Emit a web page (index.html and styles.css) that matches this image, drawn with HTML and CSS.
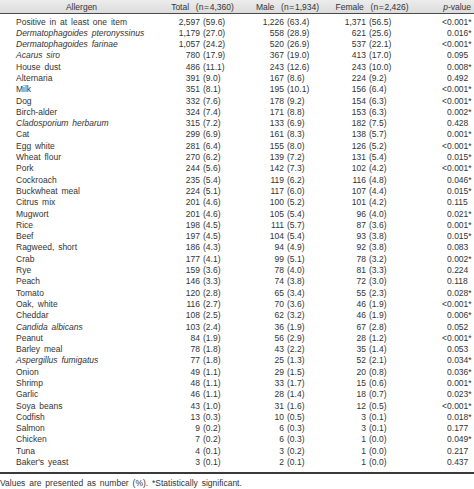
FILE: index.html
```html
<!DOCTYPE html>
<html>
<head>
<meta charset="utf-8">
<link rel="stylesheet" href="styles.css">
</head>
<body>
<table class="tbl">
<colgroup>
<col class="c-name"><col class="c-tn"><col class="c-tp"><col class="c-mn"><col class="c-mp"><col class="c-fn"><col class="c-fp"><col class="c-lt"><col class="c-pv">
</colgroup>
<thead>
<tr>
<th class="h-name">Allergen</th>
<th colspan="2" class="h-tot">Total&nbsp; (n&#8202;=&#8202;4,360)</th>
<th colspan="2" class="h-m">Male&nbsp; (n&#8202;=&#8202;1,934)</th>
<th colspan="2" class="h-f">Female&nbsp; (n&#8202;=&#8202;2,426)</th>
<th colspan="2" class="h-p"><i>p</i>-value</th>
</tr>
</thead>
<tbody>
<tr><td>Positive in at least one item</td><td>2,597</td><td>(59.6)</td><td>1,226</td><td>(63.4)</td><td>1,371</td><td>(56.5)</td><td>&lt;</td><td>0.001*</td></tr>
<tr><td><i>Dermatophagoides pteronyssinus</i></td><td>1,179</td><td>(27.0)</td><td>558</td><td>(28.9)</td><td>621</td><td>(25.6)</td><td></td><td>0.016*</td></tr>
<tr><td><i>Dermatophagoides farinae</i></td><td>1,057</td><td>(24.2)</td><td>520</td><td>(26.9)</td><td>537</td><td>(22.1)</td><td>&lt;</td><td>0.001*</td></tr>
<tr><td><i>Acarus siro</i></td><td>780</td><td>(17.9)</td><td>367</td><td>(19.0)</td><td>413</td><td>(17.0)</td><td></td><td>0.095</td></tr>
<tr><td>House dust</td><td>486</td><td>(11.1)</td><td>243</td><td>(12.6)</td><td>243</td><td>(10.0)</td><td></td><td>0.008*</td></tr>
<tr><td>Alternaria</td><td>391</td><td>(9.0)</td><td>167</td><td>(8.6)</td><td>224</td><td>(9.2)</td><td></td><td>0.492</td></tr>
<tr><td>Milk</td><td>351</td><td>(8.1)</td><td>195</td><td>(10.1)</td><td>156</td><td>(6.4)</td><td>&lt;</td><td>0.001*</td></tr>
<tr><td>Dog</td><td>332</td><td>(7.6)</td><td>178</td><td>(9.2)</td><td>154</td><td>(6.3)</td><td>&lt;</td><td>0.001*</td></tr>
<tr><td>Birch-alder</td><td>324</td><td>(7.4)</td><td>171</td><td>(8.8)</td><td>153</td><td>(6.3)</td><td></td><td>0.002*</td></tr>
<tr><td><i>Cladosporium herbarum</i></td><td>315</td><td>(7.2)</td><td>133</td><td>(6.9)</td><td>182</td><td>(7.5)</td><td></td><td>0.428</td></tr>
<tr><td>Cat</td><td>299</td><td>(6.9)</td><td>161</td><td>(8.3)</td><td>138</td><td>(5.7)</td><td></td><td>0.001*</td></tr>
<tr><td>Egg white</td><td>281</td><td>(6.4)</td><td>155</td><td>(8.0)</td><td>126</td><td>(5.2)</td><td>&lt;</td><td>0.001*</td></tr>
<tr><td>Wheat flour</td><td>270</td><td>(6.2)</td><td>139</td><td>(7.2)</td><td>131</td><td>(5.4)</td><td></td><td>0.015*</td></tr>
<tr><td>Pork</td><td>244</td><td>(5.6)</td><td>142</td><td>(7.3)</td><td>102</td><td>(4.2)</td><td>&lt;</td><td>0.001*</td></tr>
<tr><td>Cockroach</td><td>235</td><td>(5.4)</td><td>119</td><td>(6.2)</td><td>116</td><td>(4.8)</td><td></td><td>0.046*</td></tr>
<tr><td>Buckwheat meal</td><td>224</td><td>(5.1)</td><td>117</td><td>(6.0)</td><td>107</td><td>(4.4)</td><td></td><td>0.015*</td></tr>
<tr><td>Citrus mix</td><td>201</td><td>(4.6)</td><td>100</td><td>(5.2)</td><td>101</td><td>(4.2)</td><td></td><td>0.115</td></tr>
<tr><td>Mugwort</td><td>201</td><td>(4.6)</td><td>105</td><td>(5.4)</td><td>96</td><td>(4.0)</td><td></td><td>0.021*</td></tr>
<tr><td>Rice</td><td>198</td><td>(4.5)</td><td>111</td><td>(5.7)</td><td>87</td><td>(3.6)</td><td></td><td>0.001*</td></tr>
<tr><td>Beef</td><td>197</td><td>(4.5)</td><td>104</td><td>(5.4)</td><td>93</td><td>(3.8)</td><td></td><td>0.015*</td></tr>
<tr><td>Ragweed, short</td><td>186</td><td>(4.3)</td><td>94</td><td>(4.9)</td><td>92</td><td>(3.8)</td><td></td><td>0.083</td></tr>
<tr><td>Crab</td><td>177</td><td>(4.1)</td><td>99</td><td>(5.1)</td><td>78</td><td>(3.2)</td><td></td><td>0.002*</td></tr>
<tr><td>Rye</td><td>159</td><td>(3.6)</td><td>78</td><td>(4.0)</td><td>81</td><td>(3.3)</td><td></td><td>0.224</td></tr>
<tr><td>Peach</td><td>146</td><td>(3.3)</td><td>74</td><td>(3.8)</td><td>72</td><td>(3.0)</td><td></td><td>0.118</td></tr>
<tr><td>Tomato</td><td>120</td><td>(2.8)</td><td>65</td><td>(3.4)</td><td>55</td><td>(2.3)</td><td></td><td>0.028*</td></tr>
<tr><td>Oak, white</td><td>116</td><td>(2.7)</td><td>70</td><td>(3.6)</td><td>46</td><td>(1.9)</td><td>&lt;</td><td>0.001*</td></tr>
<tr><td>Cheddar</td><td>108</td><td>(2.5)</td><td>62</td><td>(3.2)</td><td>46</td><td>(1.9)</td><td></td><td>0.006*</td></tr>
<tr><td><i>Candida albicans</i></td><td>103</td><td>(2.4)</td><td>36</td><td>(1.9)</td><td>67</td><td>(2.8)</td><td></td><td>0.052</td></tr>
<tr><td>Peanut</td><td>84</td><td>(1.9)</td><td>56</td><td>(2.9)</td><td>28</td><td>(1.2)</td><td>&lt;</td><td>0.001*</td></tr>
<tr><td>Barley meal</td><td>78</td><td>(1.8)</td><td>43</td><td>(2.2)</td><td>35</td><td>(1.4)</td><td></td><td>0.053</td></tr>
<tr><td><i>Aspergillus fumigatus</i></td><td>77</td><td>(1.8)</td><td>25</td><td>(1.3)</td><td>52</td><td>(2.1)</td><td></td><td>0.034*</td></tr>
<tr><td>Onion</td><td>49</td><td>(1.1)</td><td>29</td><td>(1.5)</td><td>20</td><td>(0.8)</td><td></td><td>0.036*</td></tr>
<tr><td>Shrimp</td><td>48</td><td>(1.1)</td><td>33</td><td>(1.7)</td><td>15</td><td>(0.6)</td><td></td><td>0.001*</td></tr>
<tr><td>Garlic</td><td>46</td><td>(1.1)</td><td>28</td><td>(1.4)</td><td>18</td><td>(0.7)</td><td></td><td>0.023*</td></tr>
<tr><td>Soya beans</td><td>43</td><td>(1.0)</td><td>31</td><td>(1.6)</td><td>12</td><td>(0.5)</td><td>&lt;</td><td>0.001*</td></tr>
<tr><td>Codfish</td><td>13</td><td>(0.3)</td><td>10</td><td>(0.5)</td><td>3</td><td>(0.1)</td><td></td><td>0.018*</td></tr>
<tr><td>Salmon</td><td>9</td><td>(0.2)</td><td>6</td><td>(0.3)</td><td>3</td><td>(0.1)</td><td></td><td>0.177</td></tr>
<tr><td>Chicken</td><td>7</td><td>(0.2)</td><td>6</td><td>(0.3)</td><td>1</td><td>(0.0)</td><td></td><td>0.049*</td></tr>
<tr><td>Tuna</td><td>4</td><td>(0.1)</td><td>3</td><td>(0.2)</td><td>1</td><td>(0.0)</td><td></td><td>0.217</td></tr>
<tr><td>Baker's yeast</td><td>3</td><td>(0.1)</td><td>2</td><td>(0.1)</td><td>1</td><td>(0.0)</td><td></td><td>0.437</td></tr>
</tbody>
</table>
<p class="note">Values are presented as number (%). *Statistically significant.</p>
</body>
</html>
```
FILE: styles.css
```css
html, body {
  margin: 0;
  padding: 0;
  background: #fff;
}
body {
  width: 474px;
  height: 489px;
  overflow: hidden;
  font-family: "Liberation Sans", Arial, sans-serif;
  font-size: 8.5px;
  color: #333333;
}
.tbl {
  width: 474px;
  border-collapse: collapse;
  table-layout: fixed;
  border-bottom: 2px solid #3a3a3a;
}
.c-name { width: 165px; }
.c-tn { width: 35px; }
.c-tp { width: 45px; }
.c-mn { width: 39px; }
.c-mp { width: 46px; }
.c-fn { width: 36px; }
.c-fp { width: 54px; }
.c-lt { width: 27px; }
.c-pv { width: 27px; }
.tbl thead th {
  height: 13px;
  padding: 0;
  font-weight: normal;
  line-height: 12px;
  white-space: nowrap;
  word-spacing: 1px;
  background: linear-gradient(#ececec, #dcdcdc);
  border-bottom: 1.5px solid #4a4a4a;
}
.tbl .h-name { text-align: center; padding-right: 2px; }
.tbl .h-tot { text-align: center; padding-right: 5px; }
.tbl .h-m { text-align: center; }
.tbl .h-f { text-align: center; padding-right: 6px; }
.tbl .h-p { text-align: right; padding-right: 3px; }
.tbl tbody td {
  padding: 0;
  height: 11.3px;
  line-height: 11.3px;
  white-space: nowrap;
  word-spacing: 1.5px;
}
.tbl tbody tr:first-child td { padding-top: 2.5px; }
.tbl tbody tr:last-child td { padding-bottom: 4px; }
.tbl tbody td:nth-child(1) { padding-left: 16px; }
.tbl tbody td:nth-child(2),
.tbl tbody td:nth-child(4),
.tbl tbody td:nth-child(6),
.tbl tbody td:nth-child(8) { text-align: right; }
.tbl tbody td:nth-child(3),
.tbl tbody td:nth-child(5),
.tbl tbody td:nth-child(7) { padding-left: 3px; }
.note {
  margin: 4px 0 0 0;
  line-height: 11px;
  word-spacing: 1.5px;
  white-space: nowrap;
}
```
